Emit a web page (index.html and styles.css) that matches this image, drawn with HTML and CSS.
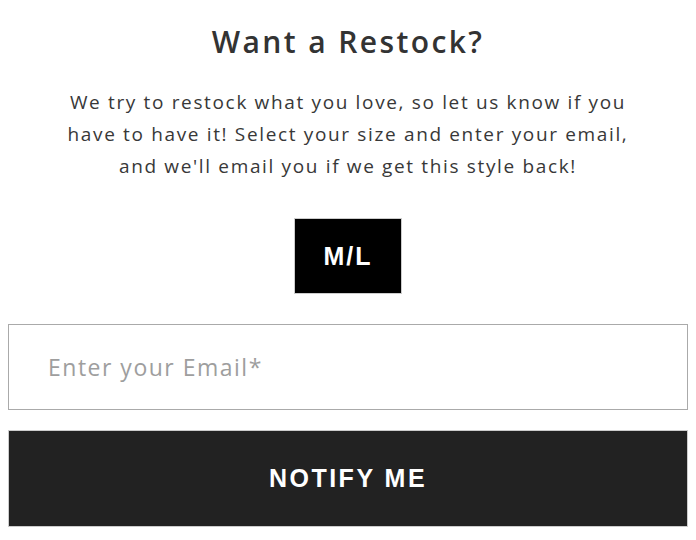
FILE: index.html
```html
<!DOCTYPE html>
<html lang="en">
<head>
    <meta charset="UTF-8">
    <meta name="viewport" content="width=device-width, initial-scale=1.0">
    <title>Want a Restock?</title>
    <link rel="stylesheet" href="styles.css">
</head>
<body>
    <div class="restock">
        <h1 class="restock-title">Want a Restock?</h1>
        <p class="restock-text">We try to restock what you love, so let us know if you have to have it! Select your size and enter your email, and we'll email you if we get this style back!</p>

        <div class="size-list">
            <button type="button" class="size-btn">M/L</button>
        </div>

        <form class="restock-form">
            <input type="email" class="email-input" placeholder="Enter your Email*">
            <button type="submit" class="notify-btn">NOTIFY ME</button>
        </form>
    </div>
</body>
</html>
```

FILE: styles.css
```css
body {
    margin: 0;
    padding: 0 8px;
    background-color: #fff;
    font-family: "Open Sans", "Liberation Sans", sans-serif;
}

.restock {
    display: flex;
    flex-direction: column;
    align-items: center;
}

.restock-title {
    margin: 23px 0 0;
    font-size: 30px;
    line-height: 38px;
    font-weight: 600;
    letter-spacing: 2.4px;
    color: #333;
}

.restock-text {
    width: 596px;
    margin: 25px 0 0;
    font-size: 19px;
    line-height: 32px;
    letter-spacing: 1.65px;
    text-align: center;
    color: #383838;
}

.size-list {
    display: flex;
    justify-content: center;
    margin-top: 36px;
}

.size-btn {
    width: 108px;
    height: 76px;
    background-color: #000;
    border: 1px solid #ccc;
    color: #fff;
    font-family: "Liberation Sans", Arial, sans-serif;
    font-size: 25px;
    font-weight: bold;
    letter-spacing: 2px;
    cursor: pointer;
}

.restock-form {
    width: 100%;
    display: flex;
    flex-direction: column;
    gap: 20px;
    margin-top: 30px;
}

.email-input {
    box-sizing: border-box;
    width: 100%;
    height: 86px;
    padding: 0 39px;
    border: 1px solid #aaa;
    font-family: "Open Sans", sans-serif;
    font-size: 23px;
    letter-spacing: 1.5px;
    color: #333;
}

.email-input::placeholder {
    color: #9e9e9e;
}

.notify-btn {
    height: 97px;
    background-color: #222;
    border: 1px solid #ccc;
    color: #fff;
    font-family: "Liberation Sans", Arial, sans-serif;
    font-size: 25px;
    font-weight: bold;
    letter-spacing: 2.5px;
    cursor: pointer;
}
```
